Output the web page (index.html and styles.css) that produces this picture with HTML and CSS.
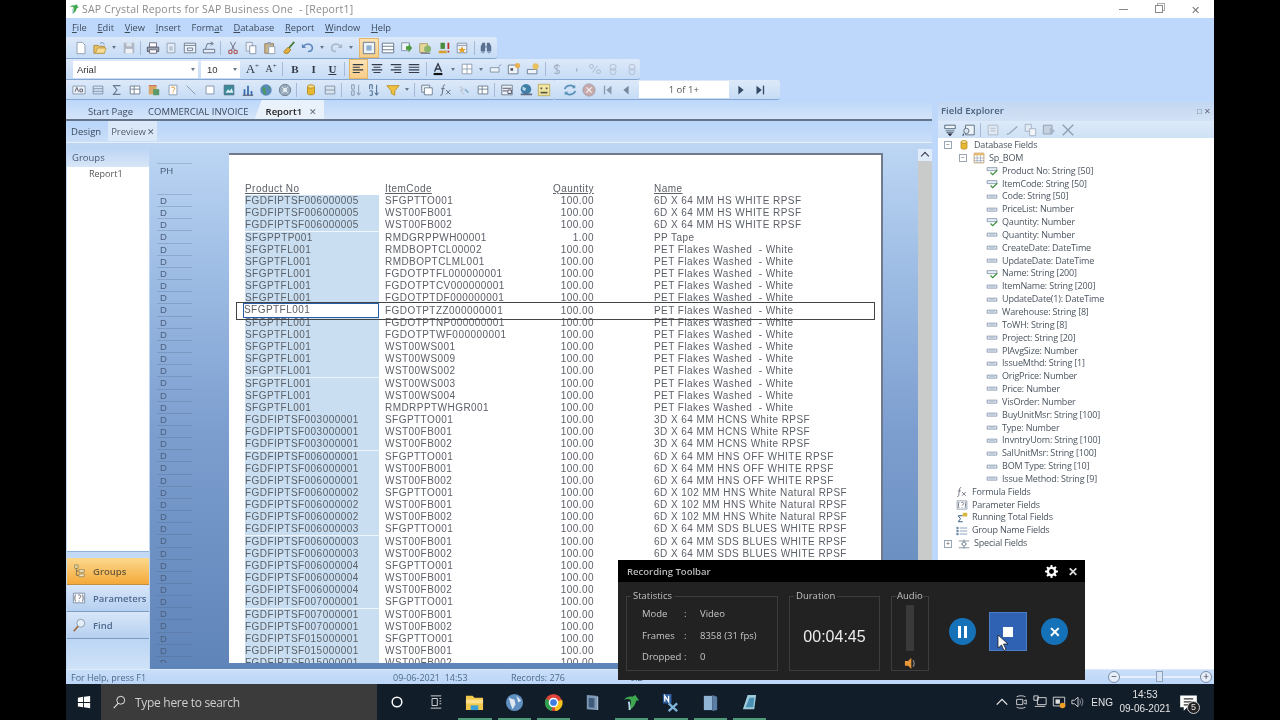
FILE: index.html
```html
<!DOCTYPE html>
<html lang="en">
<head>
<meta charset="utf-8">
<title>SAP Crystal Reports for SAP Business One - [Report1]</title>
<link rel="stylesheet" href="styles.css">
</head>
<body>
<svg class="defs" width="0" height="0" aria-hidden="true">
<symbol id="new" viewBox="0 0 16 16"><path d="M3.5 1.5h6l3 3v10h-9z" fill="#fff" stroke="#8a98a8"/></symbol>
<symbol id="open" viewBox="0 0 16 16"><path d="M1 5h5l1 1h6v8H1z" fill="#e8c060" stroke="#a88a40"/><path d="M3 14l2-6h10l-2 6z" fill="#f6dd92" stroke="#b89a50"/><path d="M8 3c2-2 4-1 5 1" fill="none" stroke="#5a80b0"/></symbol>
<symbol id="save" viewBox="0 0 16 16"><path d="M2 2h12v12H2z" fill="#aeb6c4"/><path d="M5 2h6v4H5z" fill="#dfe5ec"/><path d="M4 9h8v5H4z" fill="#eef2f6"/></symbol>
<symbol id="print" viewBox="0 0 16 16"><path d="M4 2h8v5H4z" fill="#fff" stroke="#667"/><path d="M1.500 7h13v5h-13z" fill="#9aa4b4" stroke="#556"/><path d="M4 10h8v4H4z" fill="#fff" stroke="#667"/></symbol>
<symbol id="page" viewBox="0 0 16 16"><path d="M3.500 2.500h9v11h-9z" fill="#e6edf6" stroke="#8c9cb0"/><path d="M6 6h4v5H6z" fill="#b6c4d4"/></symbol>
<symbol id="frame" viewBox="0 0 16 16"><path d="M1.500 2.500h13v11h-13z" fill="#eef3f9" stroke="#66788c"/><path d="M1.500 5h13M5 8h6v3H5z" fill="none" stroke="#66788c"/></symbol>
<symbol id="export" viewBox="0 0 16 16"><path d="M1.500 9.500h13v4h-13z" fill="#e6edf6" stroke="#5c6c80"/><path d="M4 9l2-6h6M10 1l3 2-3 2" fill="none" stroke="#5c6c80"/></symbol>
<symbol id="cut" viewBox="0 0 16 16"><path d="M11 1L6 11M5 1l5 10" stroke="#667" fill="none"/><circle cx="5" cy="12.500" r="2" fill="none" stroke="#b06060" stroke-width="1.400"/><circle cx="11" cy="12.500" r="2" fill="none" stroke="#b06060" stroke-width="1.400"/></symbol>
<symbol id="copy" viewBox="0 0 16 16"><path d="M2.500 1.500h7v10h-7z" fill="#eef3f9" stroke="#8c9cb0"/><path d="M6.500 5.500h7v9h-7z" fill="#fff" stroke="#7f8fa4"/></symbol>
<symbol id="paste" viewBox="0 0 16 16"><path d="M2 3h10v11H2z" fill="#c9b48a" stroke="#8d7c5c"/><path d="M6.500 6.500h7v8h-7z" fill="#fff" stroke="#8c9cb0"/><path d="M5 1h4v3H5z" fill="#9aa4b4"/></symbol>
<symbol id="brush" viewBox="0 0 16 16"><path d="M14 1L8 8" stroke="#4a7a3a" stroke-width="2"/><path d="M2 12l5-5 3 3-3 4H3z" fill="#e2b040" stroke="#a47c20"/></symbol>
<symbol id="undo" viewBox="0 0 16 16"><path d="M3 6c3-4 10-3 10 2 0 3-3 4-5 4" fill="none" stroke="#5f87bb" stroke-width="1.800"/><path d="M1 3v5h5z" fill="#5f87bb"/></symbol>
<symbol id="redo" viewBox="0 0 16 16"><path d="M13 6C10 2 3 3 3 8c0 3 3 4 5 4" fill="none" stroke="#a8b6c8" stroke-width="1.800"/><path d="M15 3v5h-5z" fill="#a8b6c8"/></symbol>
<symbol id="tree" viewBox="0 0 16 16"><path d="M1.500 1.500h13v13h-13z" fill="#eef3f9" stroke="#5c7088"/><path d="M5 5h6v6H5z" fill="#8fb0d0"/></symbol>
<symbol id="table" viewBox="0 0 16 16"><path d="M1.500 2.500h13v11h-13z" fill="#fff" stroke="#5c7088"/><path d="M1.500 6h13M1.500 10h13" stroke="#5c7088"/></symbol>
<symbol id="gdoc" viewBox="0 0 16 16"><path d="M3 2h9v9H3z" fill="#eef3f9" stroke="#7f8fa4"/><path d="M8 6h3V3l4 5-4 5v-3H8z" fill="#4a9a3a"/></symbol>
<symbol id="ydoc" viewBox="0 0 16 16"><path d="M2 3h9v10H2z" fill="#e8d79a" stroke="#a89a60"/><circle cx="11" cy="9" r="4" fill="#8cb46c"/><path d="M3 14h11" stroke="#557"/></symbol>
<symbol id="warn" viewBox="0 0 16 16"><path d="M4 2h5v7H4z" fill="#4a8a3a"/><path d="M2 11h9v3H2z" fill="#d9a030"/><path d="M13 2v7M13 11v2" stroke="#c03020" stroke-width="2"/></symbol>
<symbol id="star" viewBox="0 0 16 16"><path d="M2.500 2.500h11v11h-11z" fill="#eef3f9" stroke="#7f8fa4"/><path d="M2.500 5h11" stroke="#7f8fa4"/><path d="M8 6l1.500 3h3L10 11l1 3-3-2-3 2 1-3-2.500-2h3z" fill="#e2a020"/></symbol>
<symbol id="bino" viewBox="0 0 16 16"><path d="M2 6l2-4h3v10H2zM14 6l-2-4H9v10h5z" fill="#5a7090"/><path d="M7 5h2v3H7z" fill="#8ca0b8"/><path d="M3 12h3v2H3zM10 12h3v2h-3z" fill="#7f9ec2"/></symbol>
<symbol id="al" viewBox="0 0 16 16"><path d="M2 3h12M2 6h8M2 9h12M2 12h8" stroke="#333a48" stroke-width="1.300"/></symbol>
<symbol id="ac" viewBox="0 0 16 16"><path d="M2 3h12M4 6h8M2 9h12M4 12h8" stroke="#333a48" stroke-width="1.300"/></symbol>
<symbol id="ar" viewBox="0 0 16 16"><path d="M2 3h12M6 6h8M2 9h12M6 12h8" stroke="#333a48" stroke-width="1.300"/></symbol>
<symbol id="aj" viewBox="0 0 16 16"><path d="M2 3h12M2 6h12M2 9h12M2 12h12" stroke="#333a48" stroke-width="1.300"/></symbol>
<symbol id="fcolor" viewBox="0 0 16 16"><path d="M4 11L8 2l4 9M5.500 8h5" fill="none" stroke="#333a48" stroke-width="1.500"/><path d="M3 12.500h10V15H3z" fill="#111"/></symbol>
<symbol id="border" viewBox="0 0 16 16"><path d="M2.500 2.500h11v11h-11zM8 2.500v11M2.500 8h11" fill="#fff" stroke="#8a98a8"/></symbol>
<symbol id="link" viewBox="0 0 16 16"><path d="M1.500 6.500h10v5h-10z" fill="#eef3f9" stroke="#7f8fa4"/><path d="M11 5l3-2" stroke="#7f8fa4"/></symbol>
<symbol id="lblg" viewBox="0 0 16 16"><path d="M1.500 3.500h11v10h-11z" fill="#eef3f9" stroke="#66788c"/><path d="M4 7h3v3H4z" fill="#556"/><circle cx="12" cy="4" r="3" fill="#e8b050"/></symbol>
<symbol id="lbly" viewBox="0 0 16 16"><path d="M1.500 8.500h11v5h-11z" fill="#eef3f9" stroke="#66788c"/><circle cx="11" cy="5" r="3.500" fill="#e8c060"/></symbol>
<symbol id="dollar" viewBox="0 0 16 16"><path d="M11 5c-1-2-6-2-6 1s6 2 6 5-5 3-6 1M8 2v12" fill="none" stroke="#a4b2c4" stroke-width="1.300"/></symbol>
<symbol id="comma" viewBox="0 0 16 16"><path d="M8 7h1.500v3L8 12z" fill="#a4b2c4"/></symbol>
<symbol id="pct" viewBox="0 0 16 16"><circle cx="4" cy="5" r="2.200" fill="none" stroke="#a4b2c4"/><circle cx="12" cy="11" r="2.200" fill="none" stroke="#a4b2c4"/><path d="M5 12L11 4" stroke="#a4b2c4"/></symbol>
<symbol id="dec" viewBox="0 0 16 16"><circle cx="8" cy="6" r="3.500" fill="none" stroke="#b0bccc"/><circle cx="8" cy="11" r="3.500" fill="none" stroke="#b0bccc"/></symbol>
<symbol id="text" viewBox="0 0 16 16"><path d="M1 3.500h14v9H1z" fill="#eef3f9" stroke="#8496aa"/><path d="M3.500 10l2-5 2 5M9 7h3v3H9z" fill="none" stroke="#556"/></symbol>
<symbol id="group" viewBox="0 0 16 16"><path d="M2.500 3.500h11v9h-11zM2.500 6.500h11M2.500 9.500h11" fill="none" stroke="#7f8fa4"/></symbol>
<symbol id="sigma" viewBox="0 0 16 16"><path d="M12 3H4l4 5-4 5h8" fill="none" stroke="#66788c" stroke-width="1.300"/></symbol>
<symbol id="cross" viewBox="0 0 16 16"><path d="M2.500 3.500h11v9h-11zM2.500 7h11M7 3.500v9" fill="#fff" stroke="#66788c"/></symbol>
<symbol id="box3" viewBox="0 0 16 16"><path d="M2 3h9v10H2z" fill="#d8a868"/><path d="M7 7h7v7H7z" fill="#5a9a6a"/><path d="M2 3h9" stroke="#c86040"/></symbol>
<symbol id="par" viewBox="0 0 16 16"><path d="M3.500 2.500h9v11h-9z" fill="#fff" stroke="#8496aa"/><path d="M6 6c0-2 4-2 4 0s-2 2-2 4M8 11v1" fill="none" stroke="#e09020"/></symbol>
<symbol id="line" viewBox="0 0 16 16"><path d="M3 3l10 10" stroke="#7f8fa4"/></symbol>
<symbol id="rect" viewBox="0 0 16 16"><path d="M3.500 3.500h9v9h-9z" fill="#fff" stroke="#7f8fa4"/></symbol>
<symbol id="pic" viewBox="0 0 16 16"><path d="M2.500 2.500h11v11h-11z" fill="#3a8a9a" stroke="#4a6a80"/><path d="M4 11l3-4 2 2 2-3 2 5z" fill="#dfeef2"/></symbol>
<symbol id="chart" viewBox="0 0 16 16"><path d="M3 14V7h2v7zM7 14V3h2v11zM11 14V9h2v5z" fill="#3a6aa8"/><path d="M2 14h12" stroke="#445"/></symbol>
<symbol id="world" viewBox="0 0 16 16"><circle cx="8" cy="8" r="6.500" fill="#5a8abb"/><path d="M4 4l4 2-1 3 2 3-3 1-2-5zM10 3l3 3-2 1z" fill="#4a9a5a"/></symbol>
<symbol id="olap" viewBox="0 0 16 16"><circle cx="8" cy="8" r="6.500" fill="#9aaabd" stroke="#66788c"/><path d="M4 4l8 8M12 4l-8 8" stroke="#e0e8f0"/><circle cx="8" cy="8" r="2.500" fill="#e0e8f0"/></symbol>
<symbol id="db" viewBox="0 0 16 16"><path d="M4 4v8c0 2 8 2 8 0V4z" fill="#e8b830" stroke="#b08a20"/><ellipse cx="8" cy="4" rx="4" ry="2" fill="#f6dc80" stroke="#b08a20"/></symbol>
<symbol id="dbs" viewBox="0 0 16 16"><path d="M2.500 3.500h11v9h-11zM2.500 8h11" fill="#d8e2ee" stroke="#7f8fa4"/></symbol>
<symbol id="sortd" viewBox="0 0 16 16"><path d="M3 2h3v5H3zM3 9h3v5H3z" fill="none" stroke="#8496aa"/><path d="M11 2v11M9 11l2 3 2-3" fill="none" stroke="#8496aa"/></symbol>
<symbol id="sorta" viewBox="0 0 16 16"><path d="M3 7V2h3v5M3 14h3V9H3" fill="none" stroke="#3a5a80"/><path d="M11 2v11M9 11l2 3 2-3" fill="none" stroke="#3a5a80"/></symbol>
<symbol id="filter" viewBox="0 0 16 16"><path d="M1 3h14l-5 6v5l-4-2V9z" fill="#f0c040" stroke="#b89020"/></symbol>
<symbol id="fx" viewBox="0 0 16 16"><path d="M7 2c-2 0-2 1-2.500 4L3.500 13c-.3 1-1 1-2 1M2.500 6.500h4M8 8l5 5M13 8l-5 5" fill="none" stroke="#556070"/></symbol>
<symbol id="sel" viewBox="0 0 16 16"><path d="M2 2.500h9v8H2z" fill="#eef3f9" stroke="#66788c"/><path d="M5 5.500h9v8H5z" fill="#fff" stroke="#66788c"/></symbol>
<symbol id="bolt" viewBox="0 0 16 16"><path d="M3 4l4 3-3 2 4 4" fill="none" stroke="#c0c8d2" stroke-width="1.500"/><path d="M9 7l4 4" stroke="#8cb4d0" stroke-width="2"/></symbol>
<symbol id="navd" viewBox="0 0 16 16"><path d="M2 2.500h12v11H2z" fill="#eef3f9" stroke="#66788c"/><path d="M3 6h10M3 9h5M9 8h4v4H9z" fill="none" stroke="#445"/></symbol>
<symbol id="globe2" viewBox="0 0 16 16"><circle cx="8" cy="7" r="6" fill="#3f7fa8"/><path d="M4 4l4 2-1 3-3-1zM9 3l3 3z" fill="#bcd8e8"/><path d="M2 13h13" stroke="#5a6a80" stroke-width="2"/></symbol>
<symbol id="face" viewBox="0 0 16 16"><path d="M1.500 1.500h13v13h-13z" fill="#f2e6a0" stroke="#b8a860"/><path d="M4 5h2v2H4zM10 5h2v2h-2zM4 10h8v2H4z" fill="#5a5a4a"/></symbol>
<symbol id="refresh" viewBox="0 0 16 16"><path d="M2 7c1-4 8-6 11-2M14 9c-1 4-8 6-11 2" fill="none" stroke="#5b93b8" stroke-width="2"/><path d="M14 2v4h-4zM2 14v-4h4z" fill="#5b93b8"/></symbol>
<symbol id="stopx" viewBox="0 0 16 16"><circle cx="8" cy="8" r="7" fill="#c8a8a8" stroke="#a0a0aa"/><path d="M5 5l6 6M11 5l-6 6" stroke="#eee" stroke-width="1.600"/></symbol>
<symbol id="first" viewBox="0 0 16 16"><path d="M12 3v10L6 8z" fill="#8a9ab0"/><path d="M4 3v10" stroke="#8a9ab0" stroke-width="1.500"/></symbol>
<symbol id="prev" viewBox="0 0 16 16"><path d="M11 3v10L5 8z" fill="#76869c"/></symbol>
<symbol id="next" viewBox="0 0 16 16"><path d="M5 3v10l6-5z" fill="#344a64"/></symbol>
<symbol id="last" viewBox="0 0 16 16"><path d="M4 3v10l6-5z" fill="#344a64"/><path d="M12 3v10" stroke="#344a64" stroke-width="1.500"/></symbol>
<symbol id="fe1" viewBox="0 0 16 16"><path d="M2 2.500h12v4H2z" fill="#eef3f9" stroke="#445a70"/><path d="M3 9h10M4 11h8" stroke="#445a70"/><path d="M5 12h6l-3 3z" fill="#223"/></symbol>
<symbol id="fe2" viewBox="0 0 16 16"><path d="M4 2.500h10v11H4z" fill="#eef3f9" stroke="#55687c"/><circle cx="5" cy="9" r="3" fill="#dce6f0" stroke="#55687c"/><path d="M2 12l-1 3" stroke="#55687c" stroke-width="1.500"/></symbol>
<symbol id="fe3" viewBox="0 0 16 16"><path d="M2.500 2.500h11v11h-11zM5 6h6M5 9h6" fill="#e2eaf4" stroke="#a8b6c6"/></symbol>
<symbol id="fe4" viewBox="0 0 16 16"><path d="M2 13l3-1 9-8" fill="none" stroke="#98a6b8" stroke-width="1.500"/></symbol>
<symbol id="fe5" viewBox="0 0 16 16"><path d="M2.500 1.500h7v8h-7z" fill="#e2eaf4" stroke="#a0aec0"/><path d="M7.500 6.500h7v8h-7z" fill="#f2f6fa" stroke="#a0aec0"/></symbol>
<symbol id="fe6" viewBox="0 0 16 16"><path d="M1.500 2.500h10v10h-10z" fill="#c6d2e0" stroke="#8c9cb0"/><path d="M9 5l6 4-6 4z" fill="#a4b4c6"/></symbol>
<symbol id="fex" viewBox="0 0 16 16"><path d="M2 2l12 12M14 2L2 14" stroke="#8c9cb0" stroke-width="1.500"/></symbol>
<symbol id="tbl" viewBox="0 0 16 16"><path d="M1.500 1.500h13v13h-13z" fill="#fff" stroke="#b08a50"/><path d="M1.500 1.500h13v3h-13z" fill="#e8b870"/><path d="M5.500 4.500v10M10 4.500v10M1.500 8h13M1.500 11.500h13" stroke="#9aa8ba"/></symbol>
<symbol id="fld" viewBox="0 0 16 16"><path d="M1.500 5.500h13v4h-13z" fill="#e6eef8" stroke="#77899f"/><path d="M4 7.500h8" stroke="#a8b8cc"/></symbol>
<symbol id="fldc" viewBox="0 0 16 16"><path d="M1.500 3.500h13v4h-13z" fill="#e6eef8" stroke="#77899f"/><path d="M6 10l3 3 6-6" fill="none" stroke="#3f8f3f" stroke-width="1.600"/></symbol>
<symbol id="tfx" viewBox="0 0 16 16"><path d="M7 2c-2 0-2 1-2.500 4L3.500 13c-.3 1-1 1-2 1M2.500 6.500h4M8 8l5 5M13 8l-5 5" fill="none" stroke="#667" stroke-width="1.100"/></symbol>
<symbol id="tpar" viewBox="0 0 16 16"><path d="M1.500 2.500h13v11h-13z" fill="#fff" stroke="#77899f"/><path d="M4 4c-1 2-1 6 0 8M12 4c1 2 1 6 0 8M7 5c0-1 3-1 3 1s-2 2-2 3M8 11v1" fill="none" stroke="#556"/></symbol>
<symbol id="tsum" viewBox="0 0 16 16"><path d="M9 5H3l3 4-3 4h6" fill="none" stroke="#3a5a80" stroke-width="1.300"/><path d="M9 1h6v5H9z" fill="#d8b840"/></symbol>
<symbol id="tgrp" viewBox="0 0 16 16"><path d="M1 3h2v2H1zM1 7h2v2H1zM1 11h2v2H1zM5 4h10M5 8h10M5 12h10" stroke="#6a86a8" fill="#6a86a8"/></symbol>
<symbol id="tspc" viewBox="0 0 16 16"><path d="M1 4h14M1 13h14M8 2v12M4 8h8" stroke="#66788c"/><circle cx="8" cy="8" r="2.500" fill="#fff" stroke="#66788c"/></symbol>
<symbol id="sgrp" viewBox="0 0 16 16"><path d="M3 1h4v4H3z" fill="#e8d8a8" stroke="#9a8a60"/><path d="M5 5v8h3M5 8h3" fill="none" stroke="#7a6a4a"/><path d="M8 6.500h6v3H8zM8 11.500h6v3H8z" fill="#f4e6c0" stroke="#9a8a60"/></symbol>
<symbol id="sfind" viewBox="0 0 16 16"><circle cx="10" cy="6" r="4.500" fill="#e6eef8" stroke="#8496aa"/><path d="M7 9.500L2 15" stroke="#a06a3a" stroke-width="1.800"/></symbol>
<symbol id="win" viewBox="0 0 16 16"><path d="M1 3l6-1v6H1zM8 2l7-1v7H8zM1 9h6v5l-6-1zM8 9h7v6l-7-1z" fill="#fff"/></symbol>
<symbol id="mag" viewBox="0 0 16 16"><circle cx="10" cy="6" r="4.500" fill="none" stroke="#e8e8e8" stroke-width="1.100"/><path d="M7 9.500L2 15" stroke="#e8e8e8" stroke-width="1.200"/></symbol>
<symbol id="cort" viewBox="0 0 16 16"><circle cx="8" cy="8" r="5.500" fill="none" stroke="#fff" stroke-width="1.700"/></symbol>
<symbol id="tview" viewBox="0 0 16 16"><path d="M2 1h12M2 15h12" stroke="#e8e8e8"/><path d="M3.500 4h6v8h-6zM12 4h2M12 7h2M12 10h2" fill="none" stroke="#e8e8e8"/></symbol>
<symbol id="fold" viewBox="0 0 20 20"><path d="M1 3h7l2 2h9v13H1z" fill="#f2c94c"/><path d="M1 7h18v4H1z" fill="#ffe08a"/><path d="M6 13h8v5H6z" fill="#3aa0d8"/></symbol>
<symbol id="gl" viewBox="0 0 20 20"><circle cx="10" cy="10" r="9" fill="#5f8fc0"/><path d="M4 5l6 2 1 5-3 5-2-5zM12 3l5 5-3 2z" fill="#dfe8f0"/></symbol>
<symbol id="chr" viewBox="0 0 20 20"><circle cx="10" cy="10" r="9" fill="#e0433a"/><path d="M10 10L2 6a9 9 0 0 0 6 13z" fill="#2fa04f"/><path d="M10 10l2 9A9 9 0 0 0 19 7z" fill="#f6c21c"/><circle cx="10" cy="10" r="4.300" fill="#3b7de0" stroke="#fff" stroke-width="1.500"/></symbol>
<symbol id="bk" viewBox="0 0 20 20"><path d="M4 2l10 1v15L4 17z" fill="#7f98b6"/><path d="M14 3l2 1v14l-2 0z" fill="#a4bcd6"/><path d="M6 5l6 .5v10L6 15z" fill="#3e5a7c"/></symbol>
<symbol id="arr" viewBox="0 0 20 20"><path d="M14 2l4 6h-3c-1 5-4 9-8 10 2-3 3-7 2-11-2-1-4-1-7 0 3-3 6-4 9-3z" fill="#3ea84e"/><path d="M8 18c0-4 0-7-1-9" stroke="#b8d8e8" stroke-width="2" fill="none"/></symbol>
<symbol id="nx" viewBox="0 0 20 20"><path d="M2 1h9v10H2z" fill="#2f5fa0"/><path d="M4 9V3l4 6V3" fill="none" stroke="#fff" stroke-width="1.400"/><path d="M8 11l9 8M17 11l-9 8" stroke="#7fb4d8" stroke-width="2.400"/></symbol>
<symbol id="bk2" viewBox="0 0 20 20"><path d="M3 3h9v15H3z" fill="#8fb4d4"/><path d="M12 2l5 2v14l-5 1z" fill="#5a7ea4"/></symbol>
<symbol id="bk3" viewBox="0 0 20 20"><path d="M3 17L8 2h9l-2 15z" fill="#9ccbdc"/><path d="M6 15l4-10h5l-1 10z" fill="#4a90b4"/></symbol>
<symbol id="chev" viewBox="0 0 16 16"><path d="M2 11l6-6 6 6" fill="none" stroke="#e8e8e8" stroke-width="1.500"/></symbol>
<symbol id="meet" viewBox="0 0 16 16"><path d="M3 2c3-1.500 7-1.500 10 0M3 14c3 1.500 7 1.500 10 0" fill="none" stroke="#ddd"/><path d="M3 5h7v6H3zM11 7l3-1.500v5L11 9" fill="none" stroke="#ddd"/></symbol>
<symbol id="net" viewBox="0 0 16 16"><path d="M5 3h10v8H5zM1 1h5v5H1zM2 13h12" fill="#111c2a" stroke="#e0e0e0"/></symbol>
<symbol id="sync" viewBox="0 0 16 16"><path d="M1.500 2.500h13v10h-13z" fill="none" stroke="#e0e0e0"/><path d="M4 5h5v5H4z" fill="#e0e0e0"/><circle cx="12" cy="12" r="3.200" fill="#f0a020"/></symbol>
<symbol id="spk" viewBox="0 0 16 16"><path d="M1 6h3l4-3.500v11L4 10H1z" fill="none" stroke="#ddd"/><path d="M10 5c1 2 1 4 0 6M12 3.500c2 3 2 6 0 9" fill="none" stroke="#99a"/></symbol>
<symbol id="noti" viewBox="0 0 16 16"><path d="M1 2h14v10H7l-3 3v-3H1z" fill="#fff"/><path d="M4 5h8M4 7.500h8M4 10h5" stroke="#333"/></symbol>
<symbol id="gear" viewBox="0 0 16 16"><path d="M7 0h2l.4 2.300 1.500.6L12.800 1.600l1.500 1.500-1.300 1.900.6 1.500L16 7v2l-2.300.4-.6 1.500 1.300 1.900-1.500 1.500-1.900-1.300-1.500.6L9 16H7l-.4-2.300-1.500-.6-1.900 1.300-1.500-1.500 1.300-1.900-.6-1.500L0 9V7l2.300-.4.600-1.500-1.300-1.900 1.500-1.500 1.900 1.300 1.500-.6z" fill="#fff"/><circle cx="8" cy="8" r="3" fill="#000"/></symbol>
<symbol id="vol" viewBox="0 0 16 16"><path d="M1 5h4l4-4v14l-4-4H1z" fill="#e8963a"/><path d="M11 4c2 2 2 6 0 8" fill="none" stroke="#8a8a8a" stroke-width="1.500"/></symbol>
<symbol id="cur" viewBox="0 0 12 18"><path d="M1 1v13l3.500-3 2.500 5.500 2-1-2.500-5.500H11z" fill="#fff" stroke="#111" stroke-width=".7"/></symbol>
</svg>

<div class="screen">
  <div class="title">
    <svg class="app-ic"><use href="#arr"/></svg>
    <span class="title-text">SAP Crystal Reports for SAP Business One  - [Report1]</span>
    <span class="wctl">
      <span class="wmin"></span><span class="wmax"></span><span class="wx">&#10005;</span>
    </span>
  </div>

  <nav class="menu">
    <span><u>F</u>ile</span><span><u>E</u>dit</span><span><u>V</u>iew</span><span><u>I</u>nsert</span><span>Form<u>a</u>t</span><span><u>D</u>atabase</span><span><u>R</u>eport</span><span><u>W</u>indow</span><span><u>H</u>elp</span>
  </nav>

  <div class="tbar tb1">
    <svg class="i"><use href="#new"/></svg><svg class="i"><use href="#open"/></svg><i class="caret"></i><svg class="i"><use href="#save"/></svg><i class="sep"></i>
    <svg class="i"><use href="#print"/></svg><svg class="i"><use href="#page"/></svg><svg class="i"><use href="#frame"/></svg><svg class="i"><use href="#export"/></svg><i class="sep"></i>
    <svg class="i"><use href="#cut"/></svg><svg class="i"><use href="#copy"/></svg><svg class="i"><use href="#paste"/></svg><svg class="i"><use href="#brush"/></svg><svg class="i"><use href="#undo"/></svg><i class="caret"></i><svg class="i"><use href="#redo"/></svg><i class="caret"></i>
    <i class="spacer"></i>
    <span class="on"><svg class="i"><use href="#tree"/></svg></span><svg class="i"><use href="#table"/></svg><svg class="i"><use href="#gdoc"/></svg><svg class="i"><use href="#ydoc"/></svg><svg class="i"><use href="#warn"/></svg><svg class="i"><use href="#star"/></svg><i class="sep"></i><svg class="i"><use href="#bino"/></svg>
  </div>

  <div class="tbar tb2">
    <span class="combo font">Arial<i class="caret"></i></span>
    <span class="combo size">10<i class="caret"></i></span>
    <span class="t big">A<sup>+</sup></span><span class="t small">A<sup>+</sup></span><i class="sep"></i>
    <b class="t serif">B</b><i class="t serif">I</i><u class="t serif ub">U</u><i class="sep wide"></i>
    <span class="on"><svg class="i"><use href="#al"/></svg></span><svg class="i"><use href="#ac"/></svg><svg class="i"><use href="#ar"/></svg><svg class="i"><use href="#aj"/></svg><i class="sep"></i>
    <svg class="i"><use href="#fcolor"/></svg><i class="caret"></i><svg class="i"><use href="#border"/></svg><i class="caret"></i><svg class="i"><use href="#link"/></svg><svg class="i"><use href="#lblg"/></svg><svg class="i"><use href="#lbly"/></svg><i class="sep"></i>
    <svg class="i"><use href="#dollar"/></svg><svg class="i"><use href="#comma"/></svg><svg class="i"><use href="#pct"/></svg><svg class="i"><use href="#dec"/></svg><svg class="i"><use href="#dec"/></svg>
  </div>

  <div class="tb3row">
    <div class="tbar tb3">
      <svg class="i"><use href="#text"/></svg><svg class="i"><use href="#group"/></svg><svg class="i"><use href="#sigma"/></svg><svg class="i"><use href="#cross"/></svg><svg class="i"><use href="#box3"/></svg><svg class="i"><use href="#par"/></svg><svg class="i"><use href="#line"/></svg><svg class="i"><use href="#rect"/></svg><svg class="i"><use href="#pic"/></svg><svg class="i"><use href="#chart"/></svg><svg class="i"><use href="#world"/></svg><svg class="i"><use href="#olap"/></svg><i class="sep wide grip"></i>
      <svg class="i"><use href="#db"/></svg><svg class="i"><use href="#dbs"/></svg><i class="sep wide"></i>
      <svg class="i"><use href="#sortd"/></svg><svg class="i"><use href="#sorta"/></svg><svg class="i"><use href="#filter"/></svg><i class="caret"></i><i class="sep"></i>
      <svg class="i"><use href="#sel"/></svg><svg class="i"><use href="#fx"/></svg><svg class="i"><use href="#bolt"/></svg><svg class="i"><use href="#cross"/></svg><i class="sep"></i>
      <svg class="i"><use href="#navd"/></svg><svg class="i"><use href="#globe2"/></svg><svg class="i"><use href="#face"/></svg>
    </div>
    <div class="tbar tb4">
      <svg class="i"><use href="#refresh"/></svg><svg class="i"><use href="#stopx"/></svg><svg class="i"><use href="#first"/></svg><svg class="i"><use href="#prev"/></svg>
      <span class="pager">1 of 1+</span>
      <svg class="i"><use href="#next"/></svg><svg class="i"><use href="#last"/></svg>
    </div>
  </div>

  <div class="workspace">
    <div class="work">
      <div class="doctabs">
        <span class="dt">Start Page</span>
        <span class="dt">COMMERCIAL INVOICE</span>
        <span class="dt act">Report1<em>&#10005;</em></span>
      </div>
      <div class="subtabs">
        <span class="st">Design</span>
        <span class="st act">Preview<em>&#10005;</em></span>
      </div>
      <div class="panes">
        <aside class="side">
          <div class="side-h">Groups</div>
          <div class="side-list">Report1</div>
          <div class="side-split"></div>
          <div class="sbtn act"><svg class="si"><use href="#sgrp"/></svg>Groups</div>
          <div class="sbtn"><svg class="si"><use href="#tpar"/></svg>Parameters</div>
          <div class="sbtn"><svg class="si"><use href="#sfind"/></svg>Find</div>
          <div class="side-foot"></div>
        </aside>
        <div class="report">
          <div class="strip">
            <div class="sec ph">PH</div>
            <div class="sec">D</div><div class="sec">D</div><div class="sec">D</div><div class="sec">D</div><div class="sec">D</div><div class="sec">D</div><div class="sec">D</div><div class="sec">D</div><div class="sec">D</div><div class="sec">D</div><div class="sec">D</div><div class="sec">D</div><div class="sec">D</div><div class="sec">D</div><div class="sec">D</div><div class="sec">D</div><div class="sec">D</div><div class="sec">D</div><div class="sec">D</div><div class="sec">D</div><div class="sec">D</div><div class="sec">D</div><div class="sec">D</div><div class="sec">D</div><div class="sec">D</div><div class="sec">D</div><div class="sec">D</div><div class="sec">D</div><div class="sec">D</div><div class="sec">D</div><div class="sec">D</div><div class="sec">D</div><div class="sec">D</div><div class="sec">D</div><div class="sec">D</div><div class="sec">D</div><div class="sec">D</div><div class="sec">D</div><div class="sec">D</div>
          </div>
          <div class="page">
            <div class="row head"><span>Product No</span><span>ItemCode</span><span>Qauntity</span><span>Name</span></div>
            <div class="row"><span>FGDFIPTSF006000005</span><span>SFGPTTO001</span><span>100.00</span><span>6D X 64 MM HS WHITE RPSF</span></div>
            <div class="row"><span>FGDFIPTSF006000005</span><span>WST00FB001</span><span>100.00</span><span>6D X 64 MM HS WHITE RPSF</span></div>
            <div class="row"><span>FGDFIPTSF006000005</span><span>WST00FB002</span><span>100.00</span><span>6D X 64 MM HS WHITE RPSF</span></div>
            <div class="row"><span>SFGPPTP001</span><span>RMDGRPPWH00001</span><span>1.00</span><span>PP Tape</span></div>
            <div class="row"><span>SFGPTFL001</span><span>RMDBOPTCL00002</span><span>100.00</span><span>PET Flakes Washed  - White</span></div>
            <div class="row"><span>SFGPTFL001</span><span>RMDBOPTCLML001</span><span>100.00</span><span>PET Flakes Washed  - White</span></div>
            <div class="row"><span>SFGPTFL001</span><span>FGDOTPTFL000000001</span><span>100.00</span><span>PET Flakes Washed  - White</span></div>
            <div class="row"><span>SFGPTFL001</span><span>FGDOTPTCV000000001</span><span>100.00</span><span>PET Flakes Washed  - White</span></div>
            <div class="row"><span>SFGPTFL001</span><span>FGDOTPTDF000000001</span><span>100.00</span><span>PET Flakes Washed  - White</span></div>
            <div class="row sel"><span>SFGPTFL001</span><span>FGDOTPTZZ000000001</span><span>100.00</span><span>PET Flakes Washed  - White</span></div>
            <div class="row"><span>SFGPTFL001</span><span>FGDOTPTNP000000001</span><span>100.00</span><span>PET Flakes Washed  - White</span></div>
            <div class="row"><span>SFGPTFL001</span><span>FGDOTPTWF000000001</span><span>100.00</span><span>PET Flakes Washed  - White</span></div>
            <div class="row"><span>SFGPTFL001</span><span>WST00WS001</span><span>100.00</span><span>PET Flakes Washed  - White</span></div>
            <div class="row"><span>SFGPTFL001</span><span>WST00WS009</span><span>100.00</span><span>PET Flakes Washed  - White</span></div>
            <div class="row"><span>SFGPTFL001</span><span>WST00WS002</span><span>100.00</span><span>PET Flakes Washed  - White</span></div>
            <div class="row"><span>SFGPTFL001</span><span>WST00WS003</span><span>100.00</span><span>PET Flakes Washed  - White</span></div>
            <div class="row"><span>SFGPTFL001</span><span>WST00WS004</span><span>100.00</span><span>PET Flakes Washed  - White</span></div>
            <div class="row"><span>SFGPTFL001</span><span>RMDRPPTWHGR001</span><span>100.00</span><span>PET Flakes Washed  - White</span></div>
            <div class="row"><span>FGDFIPTSF003000001</span><span>SFGPTTO001</span><span>100.00</span><span>3D X 64 MM HCNS White RPSF</span></div>
            <div class="row"><span>FGDFIPTSF003000001</span><span>WST00FB001</span><span>100.00</span><span>3D X 64 MM HCNS White RPSF</span></div>
            <div class="row"><span>FGDFIPTSF003000001</span><span>WST00FB002</span><span>100.00</span><span>3D X 64 MM HCNS White RPSF</span></div>
            <div class="row"><span>FGDFIPTSF006000001</span><span>SFGPTTO001</span><span>100.00</span><span>6D X 64 MM HNS OFF WHITE RPSF</span></div>
            <div class="row"><span>FGDFIPTSF006000001</span><span>WST00FB001</span><span>100.00</span><span>6D X 64 MM HNS OFF WHITE RPSF</span></div>
            <div class="row"><span>FGDFIPTSF006000001</span><span>WST00FB002</span><span>100.00</span><span>6D X 64 MM HNS OFF WHITE RPSF</span></div>
            <div class="row"><span>FGDFIPTSF006000002</span><span>SFGPTTO001</span><span>100.00</span><span>6D X 102 MM HNS White Natural RPSF</span></div>
            <div class="row"><span>FGDFIPTSF006000002</span><span>WST00FB001</span><span>100.00</span><span>6D X 102 MM HNS White Natural RPSF</span></div>
            <div class="row"><span>FGDFIPTSF006000002</span><span>WST00FB002</span><span>100.00</span><span>6D X 102 MM HNS White Natural RPSF</span></div>
            <div class="row"><span>FGDFIPTSF006000003</span><span>SFGPTTO001</span><span>100.00</span><span>6D X 64 MM SDS BLUES WHITE RPSF</span></div>
            <div class="row"><span>FGDFIPTSF006000003</span><span>WST00FB001</span><span>100.00</span><span>6D X 64 MM SDS BLUES WHITE RPSF</span></div>
            <div class="row"><span>FGDFIPTSF006000003</span><span>WST00FB002</span><span>100.00</span><span>6D X 64 MM SDS BLUES WHITE RPSF</span></div>
            <div class="row"><span>FGDFIPTSF006000004</span><span>SFGPTTO001</span><span>100.00</span><span></span></div>
            <div class="row"><span>FGDFIPTSF006000004</span><span>WST00FB001</span><span>100.00</span><span></span></div>
            <div class="row"><span>FGDFIPTSF006000004</span><span>WST00FB002</span><span>100.00</span><span></span></div>
            <div class="row"><span>FGDFIPTSF007000001</span><span>SFGPTTO001</span><span>100.00</span><span></span></div>
            <div class="row"><span>FGDFIPTSF007000001</span><span>WST00FB001</span><span>100.00</span><span></span></div>
            <div class="row"><span>FGDFIPTSF007000001</span><span>WST00FB002</span><span>100.00</span><span></span></div>
            <div class="row"><span>FGDFIPTSF015000001</span><span>SFGPTTO001</span><span>100.00</span><span></span></div>
            <div class="row"><span>FGDFIPTSF015000001</span><span>WST00FB001</span><span>100.00</span><span></span></div>
            <div class="row"><span>FGDFIPTSF015000001</span><span>WST00FB002</span><span>100.00</span><span></span></div>
          </div>
          <div class="vbar"><span class="vup"></span></div>
        </div>
      </div>
    </div>

    <aside class="fe">
      <div class="fe-h"><span>Field Explorer</span><span class="fe-ctl">&#9633;&nbsp;&#10005;</span></div>
      <div class="fe-t">
        <svg class="i"><use href="#fe1"/></svg><svg class="i"><use href="#fe2"/></svg><i class="sep"></i><svg class="i"><use href="#fe3"/></svg><svg class="i"><use href="#fe4"/></svg><svg class="i"><use href="#fe5"/></svg><svg class="i"><use href="#fe6"/></svg><svg class="i"><use href="#fex"/></svg>
      </div>
      <ul class="tree">
        <li class="l0"><i class="ex">&minus;</i><svg class="ti"><use href="#db"/></svg>Database Fields</li>
        <li class="l1"><i class="ex">&minus;</i><svg class="ti"><use href="#tbl"/></svg>Sp_BOM</li>
        <li class="l2"><svg class="ti"><use href="#fldc"/></svg>Product No: String [50]</li>
        <li class="l2"><svg class="ti"><use href="#fldc"/></svg>ItemCode: String [50]</li>
        <li class="l2"><svg class="ti"><use href="#fld"/></svg>Code: String [50]</li>
        <li class="l2"><svg class="ti"><use href="#fld"/></svg>PriceList: Number</li>
        <li class="l2"><svg class="ti"><use href="#fldc"/></svg>Qauntity: Number</li>
        <li class="l2"><svg class="ti"><use href="#fld"/></svg>Quantity: Number</li>
        <li class="l2"><svg class="ti"><use href="#fld"/></svg>CreateDate: DateTime</li>
        <li class="l2"><svg class="ti"><use href="#fld"/></svg>UpdateDate: DateTime</li>
        <li class="l2"><svg class="ti"><use href="#fldc"/></svg>Name: String [200]</li>
        <li class="l2"><svg class="ti"><use href="#fld"/></svg>ItemName: String [200]</li>
        <li class="l2"><svg class="ti"><use href="#fld"/></svg>UpdateDate(1): DateTime</li>
        <li class="l2"><svg class="ti"><use href="#fld"/></svg>Warehouse: String [8]</li>
        <li class="l2"><svg class="ti"><use href="#fld"/></svg>ToWH: String [8]</li>
        <li class="l2"><svg class="ti"><use href="#fld"/></svg>Project: String [20]</li>
        <li class="l2"><svg class="ti"><use href="#fld"/></svg>PlAvgSize: Number</li>
        <li class="l2"><svg class="ti"><use href="#fld"/></svg>IssueMthd: String [1]</li>
        <li class="l2"><svg class="ti"><use href="#fld"/></svg>OrigPrice: Number</li>
        <li class="l2"><svg class="ti"><use href="#fld"/></svg>Price: Number</li>
        <li class="l2"><svg class="ti"><use href="#fld"/></svg>VisOrder: Number</li>
        <li class="l2"><svg class="ti"><use href="#fld"/></svg>BuyUnitMsr: String [100]</li>
        <li class="l2"><svg class="ti"><use href="#fld"/></svg>Type: Number</li>
        <li class="l2"><svg class="ti"><use href="#fld"/></svg>InvntryUom: String [100]</li>
        <li class="l2"><svg class="ti"><use href="#fld"/></svg>SalUnitMsr: String [100]</li>
        <li class="l2"><svg class="ti"><use href="#fld"/></svg>BOM Type: String [10]</li>
        <li class="l2"><svg class="ti"><use href="#fld"/></svg>Issue Method: String [9]</li>
        <li class="l0b"><svg class="ti"><use href="#tfx"/></svg>Formula Fields</li>
        <li class="l0b"><svg class="ti"><use href="#tpar"/></svg>Parameter Fields</li>
        <li class="l0b"><svg class="ti"><use href="#tsum"/></svg>Running Total Fields</li>
        <li class="l0b"><svg class="ti"><use href="#tgrp"/></svg>Group Name Fields</li>
        <li class="l0"><i class="ex">+</i><svg class="ti"><use href="#tspc"/></svg>Special Fields</li>
      </ul>
    </aside>
  </div>

  <footer class="status">
    <span class="s1">For Help, press F1</span>
    <span class="s2">09-06-2021  14:53</span>
    <span class="s3">Records: 276</span>
    <span class="s4">0.2</span>
    <span class="zoom"><span class="zbtn">&minus;</span><span class="ztrack"><i></i></span><span class="zbtn">+</span></span>
  </footer>

  <div class="taskbar">
    <span class="tk-win"><svg class="tk14"><use href="#win"/></svg></span>
    <span class="search"><svg class="tk14"><use href="#mag"/></svg>Type here to search</span>
    <span class="tk"><svg class="tk14"><use href="#cort"/></svg></span>
    <span class="tk"><svg class="tk14"><use href="#tview"/></svg></span>
    <span class="tk run"><svg class="tk20"><use href="#fold"/></svg></span>
    <span class="tk run"><svg class="tk20"><use href="#gl"/></svg></span>
    <span class="tk run"><svg class="tk20"><use href="#chr"/></svg></span>
    <span class="tk"><svg class="tk20"><use href="#bk"/></svg></span>
    <span class="tk run"><svg class="tk20"><use href="#arr"/></svg></span>
    <span class="tk run"><svg class="tk20"><use href="#nx"/></svg></span>
    <span class="tk run"><svg class="tk20"><use href="#bk2"/></svg></span>
    <span class="tk run"><svg class="tk20"><use href="#bk3"/></svg></span>
    <span class="tray">
      <svg class="tr"><use href="#chev"/></svg><svg class="tr"><use href="#meet"/></svg><svg class="tr"><use href="#net"/></svg><svg class="tr"><use href="#sync"/></svg><svg class="tr"><use href="#spk"/></svg>
      <span class="eng">ENG</span>
      <span class="clock">14:53<br>09-06-2021</span>
      <span class="noti"><svg class="tk20"><use href="#noti"/></svg><b>5</b></span>
    </span>
  </div>
</div>

<section class="rec">
  <header class="rec-h"><span>Recording Toolbar</span><svg class="gear"><use href="#gear"/></svg><span class="rec-x">&#10005;</span></header>
  <div class="rec-b">
    <fieldset class="box stats">
      <legend>Statistics</legend>
      <dl>
        <dt>Mode</dt><dd>:</dd><dd>Video</dd>
        <dt>Frames</dt><dd>:</dd><dd>8358 (31 fps)</dd>
        <dt>Dropped</dt><dd>:</dd><dd>0</dd>
      </dl>
    </fieldset>
    <fieldset class="box dur"><legend>Duration</legend><div class="time">00:04:45</div></fieldset>
    <fieldset class="box aud"><legend>Audio</legend><div class="meter"></div><svg class="vol"><use href="#vol"/></svg></fieldset>
    <div class="rbtns">
      <span class="circ"><i class="pz"></i><i class="pz"></i></span>
      <span class="stop"><i></i><svg class="cursor"><use href="#cur"/></svg></span>
      <span class="circ x">&#10005;</span>
    </div>
  </div>
</section>
</body>
</html>
```

FILE: styles.css
```css
* { box-sizing: border-box; }
html, body { margin: 0; height: 720px; overflow: hidden; background: #000; }
body { width: 1280px; position: relative; font-family: "Open Sans", "Liberation Sans", sans-serif; color: #444; font-size: 10px; }
.defs { position: absolute; }
i, em { font-style: normal; }

.screen { margin-left: 66px; width: 1148px; height: 720px; display: flex; flex-direction: column; background: #bdd8fb; filter: blur(.4px); overflow: hidden; }

/* title */
.title { height: 18px; flex: none; background: #fff; display: flex; align-items: center; padding-left: 2px; color: #8b8b8b; font-size: 10.500px; letter-spacing: .2px; }
.app-ic { width: 12px; height: 12px; margin-right: 2px; }
.title-text { white-space: pre; }
.wctl { margin-left: auto; display: flex; align-items: center; color: #777; }
.wmin { width: 9px; height: 1px; background: #888; margin-right: 27px; }
.wmax { width: 8px; height: 8px; border: 1px solid #888; margin-right: 28px; box-shadow: 2px -2px 0 -1px #fff, 2px -2px 0 0 #aaa; }
.wx { font-size: 11px; margin-right: 14px; }

/* menu */
.menu { height: 19px; flex: none; display: flex; align-items: center; padding-left: 6px; font-size: 9.300px; color: #3d4a5c; background: #bdd8fb; }
.menu span { margin-right: 10.700px; }

/* toolbars */
.tbar { display: flex; align-items: center; background: linear-gradient(#dde9f9, #c6dcf6); border-bottom: 1px solid #86a6d2; border-radius: 0 3px 3px 0; }
.tb1 { height: 22px; flex: none; width: 431px; padding-left: 6px; }
.tb2 { height: 21px; flex: none; width: 574px; padding-left: 7px; }
.tb3row { display: flex; flex: none; height: 20px; }
.tb3 { width: 489px; padding-left: 4px; }
.tb4 { width: 225px; padding-left: 6px; margin-left: 0; }
.i { width: 14px; height: 14px; margin: 0 2.350px; flex: none; display: block; }
.caret { width: 10px; flex: none; display: flex; justify-content: center; }
.caret::after { content: ""; border: 2.500px solid transparent; border-top: 3px solid #66778c; border-bottom: 0; }
.sep { width: 5.300px; flex: none; height: 14px; display: block; position: relative; }
.sep::after { content: ""; display: block; width: 1px; height: 14px; background: #a4bad6; margin-left: 2px; }
.sep.wide { width: 7.300px; }
.spacer { width: 4px; flex: none; }
.on { display: flex; height: 18px; align-items: center; background: linear-gradient(#fbe3b4, #f8cd88); outline: 1px solid #e2b568; margin: 0 .5px; }
.on .i { margin: 0 1.850px; }
.combo { background: #fff; height: 17px; display: flex; align-items: center; justify-content: space-between; font-family: "Liberation Sans", sans-serif; font-size: 9.500px; color: #333; padding-left: 4px; flex: none; }
.font { width: 125px; margin-right: 3px; }
.size { width: 39px; margin-right: 3px; padding-left: 6px; }
.t { width: 18.700px; text-align: center; flex: none; font-family: "Liberation Serif", serif; color: #333a48; font-size: 11px; line-height: 14px; }
.t sup { font-size: 7px; line-height: 0; }
.big { font-size: 13px; }
.small { font-size: 10px; }
.serif { font-weight: 700; }
.ub { text-decoration: underline; }
.pager { width: 90px; height: 17px; margin: 0 3px; background: #fff; text-align: center; line-height: 17px; font-size: 9.500px; color: #555; flex: none; }

/* workspace */
.workspace { flex: 1; min-height: 0; display: flex; }
.work { width: 866px; display: flex; flex-direction: column; flex: none; }
.doctabs { height: 21px; flex: none; display: flex; align-items: flex-end; padding-left: 16px; background: linear-gradient(#bcd7fa, #d4e4f9); border-bottom: 2px solid #64748a; font-size: 9.500px; color: #3c4a5e; }
.dt { height: 19px; line-height: 18px; padding: 3px 6px 0; margin-right: 3px; white-space: nowrap; }
.dt.act { background: #e9f1fb; font-weight: 600; color: #222; padding: 3px 7px 0 11px; margin-left: -3px; clip-path: polygon(7px 0, 100% 0, 100% 100%, 0 100%); }
.dt em { font-weight: 400; margin-left: 7px; color: #667; font-size: 8.500px; }
.subtabs { height: 22px; flex: none; display: flex; align-items: flex-end; padding: 0 0 1px 1px; background: linear-gradient(#b9d5f9, #c9def8); border-bottom: 1px solid #e6effa; font-size: 9.500px; color: #3c4a5e; }
.st { height: 20px; line-height: 21px; padding: 0 4px; margin-right: 3px; }
.st.act { background: #dbe8f8; color: #555e6c; padding: 0 2px 0 3px; }
.st em { font-size: 8.500px; margin-left: 1px; }
.panes { flex: 1; min-height: 0; display: flex; }
.side { width: 84px; flex: none; display: flex; flex-direction: column; padding: 5px 1px 0 1px; background: #bcd6f4; font-size: 9.500px; }
.side-h { height: 19px; flex: none; background: linear-gradient(#bcd5f4, #d8e6f8); line-height: 19px; padding-left: 5px; color: #4a5a70; }
.side-list { height: 385px; flex: none; background: #fff; padding: 0 0 0 22px; line-height: 14px; color: #555; border-bottom: 1px solid #8fb2da; font-size: 9px; }
.side-split { height: 6px; flex: none; background: #c3daf6; }
.sbtn { height: 27px; flex: none; display: flex; align-items: center; background: linear-gradient(#d8e6f8, #b6d0f0); border-bottom: 1px solid #7d9cc4; color: #4e6a8e; font-size: 9.500px; font-weight: 600; padding-left: 5px; }
.sbtn.act { background: linear-gradient(#fcd98e, #f5a93a); color: #6a5a3a; border-bottom-color: #c09040; }
.si { width: 14px; height: 14px; margin-right: 7px; flex: none; }
.side-foot { flex: 1; background: linear-gradient(#bcd6f4, #cfe2f8); }

.report { flex: 1; min-width: 0; display: flex; padding-left: 7px; padding-bottom: 6px; background: linear-gradient(#bdd6f4, #9dbce4 25%, #7c9ecf 55%, #5f84b8); position: relative; }
.strip { width: 72px; flex: none; padding-top: 20px; color: #4d607c; font-family: "Liberation Sans", sans-serif; overflow: hidden; }
.sec { width: 35px; height: 12.170px; line-height: 12px; border-top: 1px solid rgba(70, 90, 120, .25); padding-left: 3px; font-size: 9.500px; }
.sec.ph { height: 31px; line-height: 12px; padding-top: 1px; }
.page { width: 654px; flex: none; margin-top: 10px; background: #fff; border-top: 2px solid #707a8c; border-right: 2px solid #707a8c; padding: 28px 0 0 16px; overflow: hidden; font-family: "Liberation Sans", sans-serif; font-size: 10px; color: #5c6068; letter-spacing: .45px; }
.row { display: grid; grid-template-columns: 140px 168px 41px 1fr; height: 12.170px; line-height: 12px; white-space: pre; position: relative; }
.row span:nth-child(1) { background: #c9dff1; margin-right: 6px; border-bottom: 1px solid #eef5fb; }
.row span:nth-child(3) { text-align: right; }
.row span:nth-child(4) { padding-left: 60px; }
.head span, .head span:nth-child(1) { background: none; border: 0; text-decoration: underline; }
.head span:nth-child(3) { text-align: left; }
.sel { background: #fff; z-index: 1; height: 15px; margin: -1.400px 0; line-height: 15px; }
.sel::before { content: ""; position: absolute; left: -9px; top: -1px; width: 637px; height: 16px; border: 1.500px solid #444; }
.sel span:nth-child(1) { background: #fff; border: 1.500px solid #2a5ea8; border-width: 1.500px 1px; margin-left: -2px; margin-right: 6px; line-height: 12px; }
.vbar { width: 14px; flex: none; margin-left: 35px; margin-top: 6px; background: #c8cbca; }
.vup { display: block; height: 12px; background: #e0ecf9; position: relative; }
.vup::after { content: ""; position: absolute; left: 4px; top: 4px; width: 5px; height: 5px; border: solid #334; border-width: 1.500px 0 0 1.500px; transform: rotate(45deg); }

/* field explorer */
.fe { flex: 1; display: flex; flex-direction: column; margin: 2px 0 0 6px; background: #fff; min-width: 0; }
.fe-h { height: 19px; flex: none; display: flex; justify-content: space-between; align-items: center; padding: 0 3px 2px 3px; background: linear-gradient(#c4d8f2, #d2e1f5); font-size: 9.500px; color: #48627e; font-weight: 600; }
.fe-ctl { font-size: 8px; font-weight: 400; color: #667; }
.fe-t { height: 17px; flex: none; display: flex; align-items: center; padding-left: 3px; background: linear-gradient(#dceaf9, #cfe1f6); }
.tree { list-style: none; margin: 0; padding: 1px 0 0; flex: 1; font-size: 9px; color: #4b5560; letter-spacing: -.02em; font-family: "Open Sans", "Liberation Sans", sans-serif; }
.tree li { height: 12.850px; line-height: 12.850px; display: flex; align-items: center; white-space: pre; }
.l0 { padding-left: 6px; }
.l1 { padding-left: 21px; }
.l2 { padding-left: 48px; }
.l0b { padding-left: 18px; }
.ex { width: 8px; height: 8px; border: 1px solid #99a5b2; font-size: 7px; line-height: 6px; text-align: center; color: #556; margin-right: 6px; flex: none; }
.ti { width: 12px; height: 12px; margin-right: 4px; flex: none; }

/* status */
.status { height: 15px; flex: none; margin-top: 0; display: flex; align-items: center; background: linear-gradient(#c9def8, #bcd6f8); font-size: 9px; color: #4d6a8c; position: relative; border-top: 1px solid #dceafb; }
.s1 { margin-left: 5px; width: 322px; }
.s2 { width: 118px; white-space: pre; }
.s3 { width: 119px; }
.zoom { margin-left: auto; display: flex; align-items: center; margin-right: 2px; }
.zbtn { width: 12px; height: 12px; border-radius: 50%; border: 1px solid #7b8ea8; background: #e6eef9; line-height: 9px; text-align: center; font-size: 10px; color: #334; }
.ztrack { width: 80px; height: 2px; background: #e6eef9; position: relative; margin: 0 0 0 0; display: block; }
.ztrack i { position: absolute; left: 36px; top: -5px; width: 7px; height: 11px; background: #d6e4f6; border: 1px solid #8ea2bc; }

/* taskbar */
.taskbar { height: 36px; flex: none; background: #121d2a; display: flex; align-items: center; color: #e4e4e4; font-family: "Liberation Sans", sans-serif; }
.tk-win { width: 35px; display: flex; justify-content: center; flex: none; }
.tk14 { width: 14px; height: 14px; display: block; }
.tk20 { width: 19px; height: 19px; display: block; }
.search { width: 276px; height: 36px; flex: none; background: #3b3b3b; display: flex; align-items: center; padding-left: 11px; font-size: 12px; color: #cfcfcf; font-family: "Open Sans", sans-serif; letter-spacing: -.3px; }
.search .tk14 { margin-right: 9px; }
.tk { width: 39.200px; height: 36px; flex: none; display: flex; align-items: center; justify-content: center; position: relative; }
.tk.run::after { content: ""; position: absolute; left: 3px; right: 3px; bottom: 0; height: 2px; background: #4f9a78; }
.tray { margin-left: auto; display: flex; align-items: center; height: 36px; padding-right: 7px; }
.tr { width: 14px; height: 14px; margin: 0 2.500px; flex: none; }
.eng { font-size: 10px; margin: 0 6px 0 4px; }
.clock { width: 52px; text-align: center; font-size: 10px; line-height: 14.500px; margin-right: 8px; }
.noti { position: relative; width: 28px; display: block; }
.noti b { position: absolute; left: 8px; top: 8px; width: 13px; height: 13px; border-radius: 50%; background: #222; border: 1px solid #ccc; font-size: 9px; line-height: 11px; text-align: center; font-weight: 400; }

/* recording toolbar */
.rec { position: absolute; left: 618px; top: 560px; width: 467px; height: 120px; background: #222; color: #c6c6c6; font-family: "Open Sans", "Liberation Sans", sans-serif; filter: blur(.3px); }
.rec-h { height: 22px; background: #000; display: flex; align-items: center; padding: 0 6px 0 9px; font-size: 9.500px; font-weight: 600; color: #bcbcbc; }
.gear { width: 13px; height: 13px; margin-left: auto; margin-right: 8px; }
.rec-x { font-size: 12px; color: #ddd; width: 13px; text-align: center; }
.rec-b { display: flex; padding: 7px 0 0 8px; align-items: flex-start; }
.box { margin: 0; padding: 0; border: 1px solid #3d3d3d; height: 82px; min-width: 0; font-size: 9.500px; }
.box legend { padding: 0 2px; color: #c0c0c0; margin-left: 4px; line-height: 14px; font-size: 9.500px; }
.stats { width: 152px; margin-right: 11px; }
.stats dl { margin: 0 0 0 15px; display: grid; grid-template-columns: 42px 16px 1fr; grid-auto-rows: 21.500px; align-items: center; font-size: 9.500px; }
.stats dd { margin: 0; }
.dur { width: 91px; margin-right: 11px; }
.time { text-align: center; font-family: "Liberation Sans", sans-serif; font-size: 16px; color: #ececec; margin-top: 25px; }
.aud { width: 38px; display: flex; flex-direction: column; align-items: center; }
.aud legend { margin-left: 5px; padding: 0; }
.meter { width: 8px; height: 47px; background: #3a3a3a; margin-top: 2px; }
.vol { width: 13px; height: 13px; margin-top: 6px; }
.rbtns { display: flex; align-items: center; height: 82px; margin-left: 19px; margin-top: 0; }
.circ { width: 27px; height: 27px; border-radius: 50%; background: #1572b8; display: flex; align-items: center; justify-content: center; gap: 2.500px; color: #fff; font-size: 14px; font-weight: 700; flex: none; margin: 3px 0 0 1px; }
.pz { width: 3px; height: 12px; background: #fff; }
.stop { width: 38px; height: 39px; background: #2f62b2; border: 1px solid #4b7cc8; margin: 3px 13px 0 13px; display: flex; align-items: center; justify-content: center; position: relative; flex: none; }
.stop i { width: 10px; height: 10px; background: #fff; }
.cursor { position: absolute; left: 7px; top: 21px; width: 12px; height: 18px; }
```
